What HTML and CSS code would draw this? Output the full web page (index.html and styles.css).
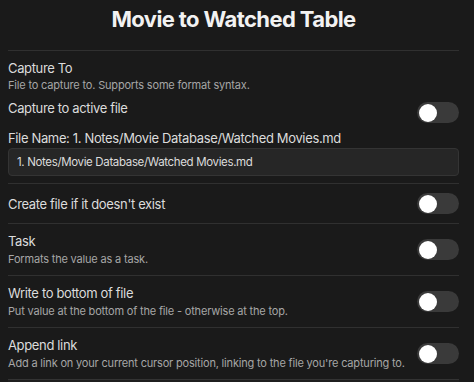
FILE: index.html
```html
<!DOCTYPE html>
<html>
<head>
<meta charset="utf-8">
<link rel="stylesheet" href="styles.css">
</head>
<body>
<div class="modal">
  <h1 class="title">Movie to Watched Table</h1>

  <div class="group first">
    <div class="name">Capture To</div>
    <div class="desc tight">File to capture to. Supports some format syntax.</div>
    <div class="row-active">
      <div class="name">Capture to active file</div>
      <div class="toggle low"><span class="knob"></span></div>
    </div>
    <div class="name label">File Name: 1. Notes/Movie Database/Watched Movies.md</div>
    <div class="input">1. Notes/Movie Database/Watched Movies.md</div>
  </div>

  <div class="item single">
    <div class="info"><div class="name">Create file if it doesn't exist</div></div>
    <div class="toggle"><span class="knob"></span></div>
  </div>

  <div class="item">
    <div class="info">
      <div class="name">Task</div>
      <div class="desc">Formats the value as a task.</div>
    </div>
    <div class="toggle"><span class="knob"></span></div>
  </div>

  <div class="item">
    <div class="info">
      <div class="name">Write to bottom of file</div>
      <div class="desc">Put value at the bottom of the file - otherwise at the top.</div>
    </div>
    <div class="toggle"><span class="knob"></span></div>
  </div>

  <div class="item">
    <div class="info">
      <div class="name">Append link</div>
      <div class="desc">Add a link on your current cursor position, linking to the file you're capturing to.</div>
    </div>
    <div class="toggle"><span class="knob"></span></div>
  </div>

  <div class="next"></div>
</div>
</body>
</html>
```

FILE: styles.css
```css
html, body {
  margin: 0;
  padding: 0;
  background: #1a1a1a;
  height: 100%;
  overflow: hidden;
}
body {
  font-family: Inter, "Noto Sans", sans-serif;
  color: #dadada;
}
.modal {
  padding: 0 15px 0 8px;
}
.title {
  margin: 0;
  padding: 4px 0 16px;
  font-size: 22px;
  line-height: 30px;
  font-weight: 700;
  letter-spacing: -0.6px;
  text-align: center;
  color: #f2f2f2;
}
.group, .item {
  border-top: 1px solid #303030;
}
.name {
  font-size: 13px;
  line-height: 20px;
  letter-spacing: -0.35px;
  color: #dcdcdc;
  white-space: nowrap;
}
.desc {
  font-size: 11px;
  line-height: 17px;
  letter-spacing: -0.18px;
  color: #a6a6a6;
  white-space: nowrap;
}
.desc.tight {
  line-height: 15px;
}
.group {
  padding: 7px 0 7px;
}
.row-active {
  display: flex;
  justify-content: space-between;
  align-items: flex-start;
  padding-top: 5px;
}
.toggle {
  flex: none;
  width: 42px;
  height: 21px;
  border-radius: 11px;
  background: #3a3a3a;
  position: relative;
}
.toggle.low {
  margin-top: 4px;
}
.knob {
  position: absolute;
  left: 2px;
  top: 1.5px;
  width: 18px;
  height: 18px;
  border-radius: 50%;
  background: #ffffff;
}
.label {
  margin-top: 5px;
}
.input {
  box-sizing: border-box;
  height: 28px;
  padding: 0 8px;
  background: #262626;
  border: 1px solid #343434;
  border-radius: 4px;
  font-size: 11.5px;
  line-height: 26px;
  letter-spacing: -0.35px;
  color: #dcdcdc;
  white-space: nowrap;
}
.item {
  display: flex;
  align-items: center;
  justify-content: space-between;
  padding: 7px 0 7px;
}
.item.single {
  padding: 9px 0 9px;
}
.info {
  flex: 1;
  min-width: 0;
}
.next {
  height: 10px;
  border-top: 1px solid #333;
  background: #1f1f1f;
}
```
